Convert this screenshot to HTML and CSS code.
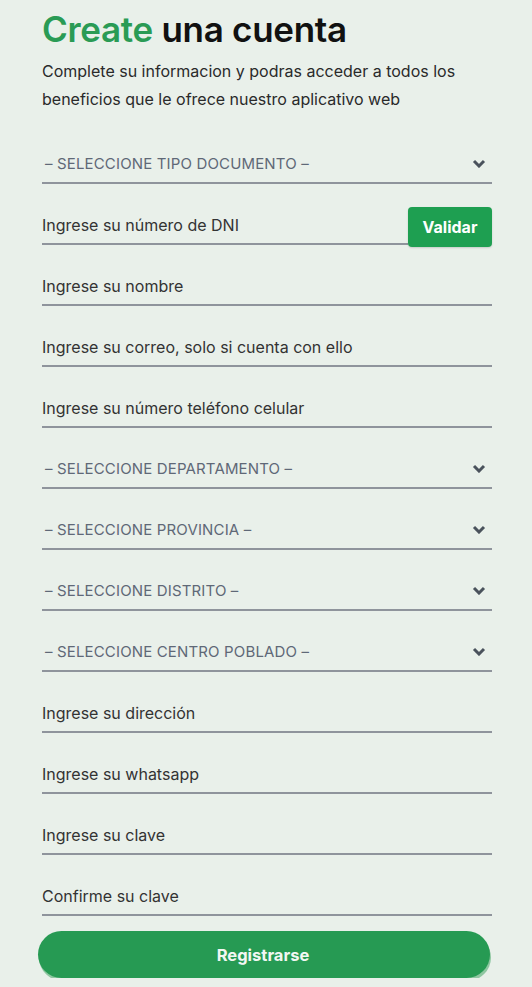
FILE: index.html
```html
<!DOCTYPE html>
<html lang="es">
<head>
<meta charset="utf-8">
<title>Create una cuenta</title>
<link rel="stylesheet" href="styles.css">
</head>
<body>
<main class="page">
  <h1 class="title"><span class="accent">Create</span> una cuenta</h1>
  <p class="lead">Complete su informacion y podras acceder a todos los beneficios que le ofrece nuestro aplicativo web</p>

  <form class="form">
    <div class="field select"><span class="ph">– SELECCIONE TIPO DOCUMENTO –</span><svg class="chev" viewBox="0 0 14 9"><path d="M2 2 L7 7 L12 2"/></svg></div>
    <div class="dni-row">
      <div class="field input grow"><span class="tx">Ingrese su número de DNI</span></div>
      <button type="button" class="validar">Validar</button>
    </div>
    <div class="field input"><span class="tx">Ingrese su nombre</span></div>
    <div class="field input"><span class="tx">Ingrese su correo, solo si cuenta con ello</span></div>
    <div class="field input"><span class="tx">Ingrese su número teléfono celular</span></div>
    <div class="field select"><span class="ph">– SELECCIONE DEPARTAMENTO –</span><svg class="chev" viewBox="0 0 14 9"><path d="M2 2 L7 7 L12 2"/></svg></div>
    <div class="field select"><span class="ph">– SELECCIONE PROVINCIA –</span><svg class="chev" viewBox="0 0 14 9"><path d="M2 2 L7 7 L12 2"/></svg></div>
    <div class="field select"><span class="ph">– SELECCIONE DISTRITO –</span><svg class="chev" viewBox="0 0 14 9"><path d="M2 2 L7 7 L12 2"/></svg></div>
    <div class="field select"><span class="ph">– SELECCIONE CENTRO POBLADO –</span><svg class="chev" viewBox="0 0 14 9"><path d="M2 2 L7 7 L12 2"/></svg></div>
    <div class="field input"><span class="tx">Ingrese su dirección</span></div>
    <div class="field input"><span class="tx">Ingrese su whatsapp</span></div>
    <div class="field input"><span class="tx">Ingrese su clave</span></div>
    <div class="field input"><span class="tx">Confirme su clave</span></div>
    <button type="button" class="submit">Registrarse</button>
  </form>
</main>
</body>
</html>
```
FILE: styles.css
```css
html, body {
  margin: 0;
  padding: 0;
  background: #e9f0ea;
}
body {
  font-family: Inter, "Noto Sans", sans-serif;
  color: #2b2b2b;
}
.page {
  width: 450px;
  margin: 0 0 0 42px;
  padding-top: 9px;
}
.title {
  margin: 0;
  font-size: 35px;
  line-height: 40px;
  font-weight: 600;
  letter-spacing: -0.3px;
  color: #111;
}
.accent {
  color: #2a9b55;
}
.lead {
  margin: 8px 0 0 0;
  font-size: 16px;
  line-height: 28px;
  color: #2a2a2a;
  letter-spacing: 0;
}
.form {
  display: flex;
  flex-direction: column;
  margin-top: 10px;
}
.field {
  height: 61px;
  box-sizing: border-box;
  border-bottom: 2px solid #8f949c;
  display: flex;
  align-items: flex-end;
  justify-content: space-between;
  padding-bottom: 8px;
}
.ph {
  font-size: 15px;
  line-height: 20px;
  color: #5f6877;
  padding-left: 3px;
  letter-spacing: 0.15px;
}
.tx {
  font-size: 16px;
  line-height: 20px;
  color: #333;
  letter-spacing: 0;
}
.chev {
  width: 14px;
  height: 9px;
  margin: 0 6px 6px 0;
  fill: none;
  stroke: #4a525c;
  stroke-width: 3;
}
.dni-row {
  display: flex;
  align-items: flex-end;
}
.grow {
  flex: 1;
}
.validar {
  width: 84px;
  height: 40px;
  margin-bottom: -2px;
  border: none;
  border-radius: 4px;
  background: #1e9f51;
  color: #fff;
  font-family: inherit;
  font-size: 16px;
  font-weight: 700;
  box-shadow: 0 1px 2px rgba(0,0,0,0.15);
}
.submit {
  margin: 15px 0 0 -4px;
  width: 452px;
  height: 47px;
  border: none;
  border-radius: 24px;
  background: #269a53;
  color: #f2f7f3;
  font-family: inherit;
  font-size: 16.5px;
  font-weight: 700;
  padding-right: 8px;
  box-shadow: 1px 3px 0 #8fc7a1;
}
```
